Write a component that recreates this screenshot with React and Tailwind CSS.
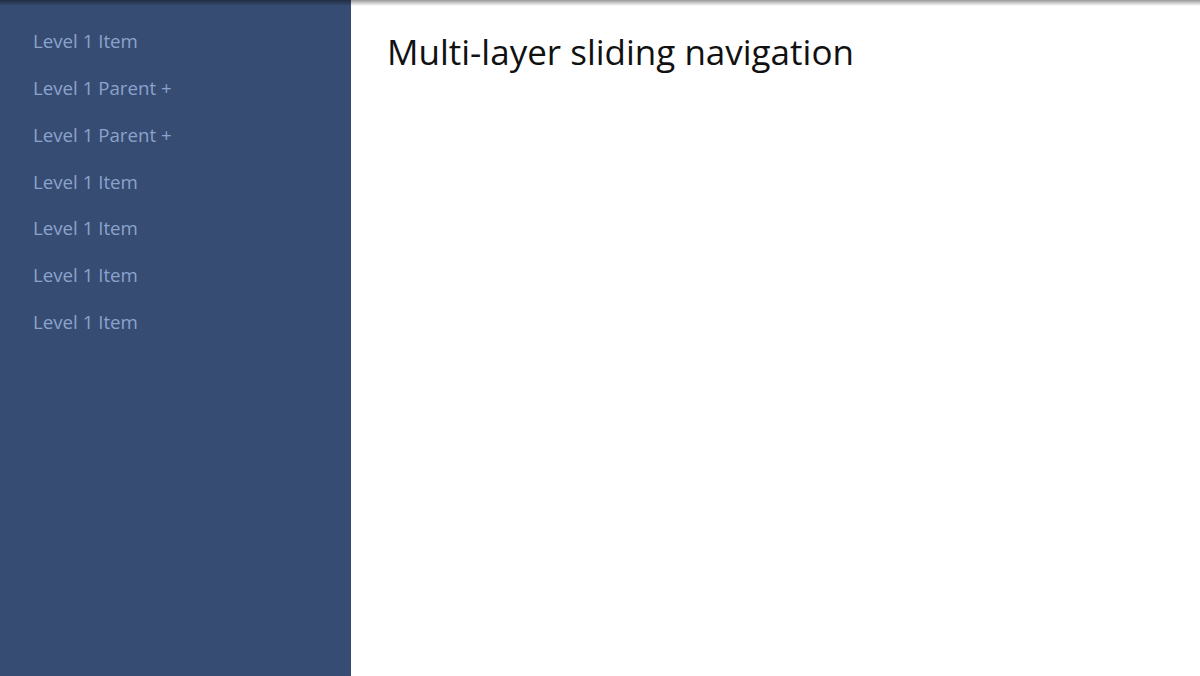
export default function App() {
  const items = [
    "Level 1 Item",
    "Level 1 Parent +",
    "Level 1 Parent +",
    "Level 1 Item",
    "Level 1 Item",
    "Level 1 Item",
    "Level 1 Item",
  ];
  return (
    <div
      className="relative flex h-[676px] w-[1200px] overflow-hidden bg-white"
      style={{ fontFamily: '"Open Sans", sans-serif' }}
    >
      <nav className="w-[351px] shrink-0 bg-[#374c72] pt-[26px]">
        <ul className="flex flex-col">
          {items.map((t, i) => (
            <li key={i} className="h-[46.85px] pl-[33px] text-[18.7px] leading-[30px] text-[#8ba3cc]">
              {t}
            </li>
          ))}
        </ul>
      </nav>
      <main className="flex-1 pl-[36px] pt-[30px]">
        <h1 className="text-[35px] leading-[44px] text-[#111]">Multi-layer sliding navigation</h1>
      </main>
      <div className="pointer-events-none absolute inset-x-0 top-0 h-[6px] bg-gradient-to-b from-black/40 to-transparent" />
    </div>
  );
}
